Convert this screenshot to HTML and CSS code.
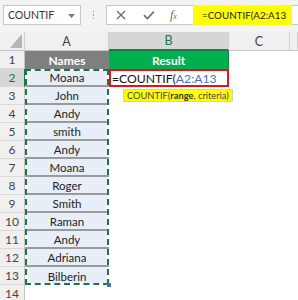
FILE: index.html
```html
<!DOCTYPE html>
<html>
<head>
<meta charset="utf-8">
<link rel="stylesheet" href="styles.css">
</head>
<body>
<div class="toolbar">
  <div class="namebox">
    <span>COUNTIF</span>
    <svg class="dd" width="7" height="4" viewBox="0 0 7 4"><path d="M0 0h7L3.5 4z" fill="#7a7a7a"/></svg>
  </div>
  <div class="grip"><i></i><i></i><i></i></div>
  <div class="fbar">
    <div class="ficons">
      <svg class="ic-x" width="10" height="10" viewBox="0 0 10 10"><path d="M1 1l8 8M9 1l-8 8" stroke="#6b6b6b" stroke-width="1.3"/></svg>
      <svg class="ic-ok" width="12" height="10" viewBox="0 0 12 10"><path d="M1 5.2l3.4 3.3L11 1.5" stroke="#6b6b6b" stroke-width="1.7" fill="none"/></svg>
      <span class="fx">f<span class="fxs">x</span></span>
    </div>
    <div class="formula">=COUNTIF(A2:A13</div>
  </div>
</div>
<div class="sheet">
  <div class="col rh">
    <div class="corner"><svg width="12" height="14" viewBox="0 0 12 14"><path d="M12 0V14H0z" fill="#b5b5b5"/></svg></div>
    <div class="rn">1</div>
    <div class="rn sel">2</div>
    <div class="rn">3</div>
    <div class="rn">4</div>
    <div class="rn">5</div>
    <div class="rn">6</div>
    <div class="rn">7</div>
    <div class="rn">8</div>
    <div class="rn">9</div>
    <div class="rn">10</div>
    <div class="rn">11</div>
    <div class="rn">12</div>
    <div class="rn">13</div>
    <div class="rn">14</div>
  </div>
  <div class="col ca">
    <div class="ch">A</div>
    <div class="cell names">Names</div>
    <div class="range">
      <div class="nm">Moana</div>
      <div class="nm">John</div>
      <div class="nm">Andy</div>
      <div class="nm">smith</div>
      <div class="nm">Andy</div>
      <div class="nm">Moana</div>
      <div class="nm">Roger</div>
      <div class="nm">Smith</div>
      <div class="nm">Raman</div>
      <div class="nm">Andy</div>
      <div class="nm">Adriana</div>
      <div class="nm">Bilberin</div>
      <span class="handle"></span>
    </div>
  </div>
  <div class="col cb">
    <div class="ch sel">B</div>
    <div class="cell result">Result</div>
    <div class="cell active">=COUNTIF(<span class="ref">A2:A13</span>
      <div class="tip">COUNTIF(<b>range</b>, criteria)</div>
    </div>
  </div>
  <div class="col cc">
    <div class="ch">C</div>
  </div>
  <div class="col cd">
    <div class="ch"></div>
  </div>
</div>
</body>
</html>
```

FILE: styles.css
```css
* { box-sizing: border-box; }
html, body { margin: 0; padding: 0; }
body {
  width: 298px;
  height: 300px;
  overflow: hidden;
  background: #ffffff;
  font-family: "Lato", "Liberation Sans", sans-serif;
  color: #222;
}

/* ---------- toolbar ---------- */
.toolbar {
  height: 32px;
  background: #f3f3f3;
  display: flex;
  align-items: flex-start;
  padding-top: 5px;
  padding-left: 3px;
}
.namebox {
  width: 78px;
  height: 20px;
  background: #fff;
  border: 1px solid #c8c8c8;
  display: flex;
  align-items: center;
  justify-content: space-between;
  padding: 0 5px 0 4px;
  font-size: 10.5px;
  color: #333;
}
.dd { margin-top: 1px; }
.grip {
  width: 25px;
  height: 20px;
  display: flex;
  flex-direction: column;
  align-items: center;
  justify-content: center;
  gap: 2px;
}
.grip i {
  display: block;
  width: 1.5px;
  height: 1.5px;
  background: #9a9a9a;
}
.fbar {
  flex: 1;
  height: 20px;
  background: #fff;
  border: 1px solid #c8c8c8;
  border-right: none;
  display: flex;
  align-items: stretch;
}
.ficons {
  width: 86px;
  display: flex;
  align-items: center;
  padding-left: 9px;
}
.ic-x { margin-right: 17px; }
.ic-ok { margin-right: 15px; }
.fx {
  font-family: "Liberation Serif", serif;
  font-style: italic;
  font-size: 12px;
  color: #6b6b6b;
}
.fxs { font-size: 8px; }
.formula {
  width: 99px;
  background: #ffff00;
  font-size: 9.8px;
  color: #222;
  display: flex;
  align-items: center;
  padding-left: 9px;
  margin: -1px 0;
}

/* ---------- sheet ---------- */
.sheet {
  display: flex;
  align-items: flex-start;
}
.col {
  display: flex;
  flex-direction: column;
}
.rh { width: 25px; }
.ca { width: 84px; }
.cb { width: 120px; }
.cc { width: 61px; }
.cd { flex: 1; }

.corner {
  height: 19px;
  background: #f0f0f0;
  border-right: 1px solid #d0d0d0;
  border-bottom: 1px solid #c4c4c4;
  display: flex;
  align-items: flex-end;
  justify-content: flex-end;
  padding: 0 2px 2px 0;
}
.rn {
  height: 18px;
  background: #f0f0f0;
  border-right: 1px solid #c4c4c4;
  border-bottom: 1px solid #dadada;
  font-size: 12px;
  color: #444;
  display: flex;
  align-items: center;
  justify-content: center;
}
.rn.sel {
  background: #d6d6d6;
  color: #217346;
  border-right: 1px solid #217346;
}
.ch {
  height: 19px;
  background: #f0f0f0;
  border-right: 1px solid #d0d0d0;
  border-bottom: 1px solid #c4c4c4;
  font-size: 12.5px;
  color: #444;
  display: flex;
  align-items: center;
  justify-content: center;
}
.ch.sel {
  background: #d6d6d6;
  color: #217346;
  border-bottom: 2px solid #217346;
}
.cell {
  height: 18px;
  display: flex;
  align-items: center;
  justify-content: center;
  font-size: 12px;
}
.names {
  background: #7f7f7f;
  color: #fff;
  font-weight: bold;
}
.result {
  background: #00b050;
  color: #fff;
  font-weight: bold;
  border-right: 1px solid #0a8a40;
}
.range {
  position: relative;
  height: 216px;
  background: #e8eef8;
  box-shadow: inset 0 0 0 2px #ffffff;
  outline: 2px dashed #217346;
  outline-offset: -2px;
  display: flex;
  flex-direction: column;
}
.nm {
  height: 18px;
  border-bottom: 2px solid #9a9a9a;
  font-size: 11.5px;
  color: #222;
  display: flex;
  align-items: center;
  justify-content: center;
  padding-top: 1px;
}
.nm:last-of-type { border-bottom: none; }
.handle {
  position: absolute;
  right: -2px;
  bottom: -2px;
  width: 4px;
  height: 4px;
  background: #3b73c8;
}
.active {
  position: relative;
  border: 2px solid #e8101a;
  justify-content: flex-start;
  padding-left: 1px;
  font-size: 12.2px;
  color: #111;
  overflow: visible;
}
.ref { color: #4472c4; }
.tip {
  position: absolute;
  left: 12px;
  top: 18px;
  width: 110px;
  height: 13px;
  background: #ffff00;
  border: 1px solid #d6d6a0;
  font-size: 9.3px;
  color: #444;
  display: flex;
  align-items: center;
  padding-left: 3px;
  white-space: nowrap;
  z-index: 2;
}
.tip b { font-weight: bold; color: #333; }
```
